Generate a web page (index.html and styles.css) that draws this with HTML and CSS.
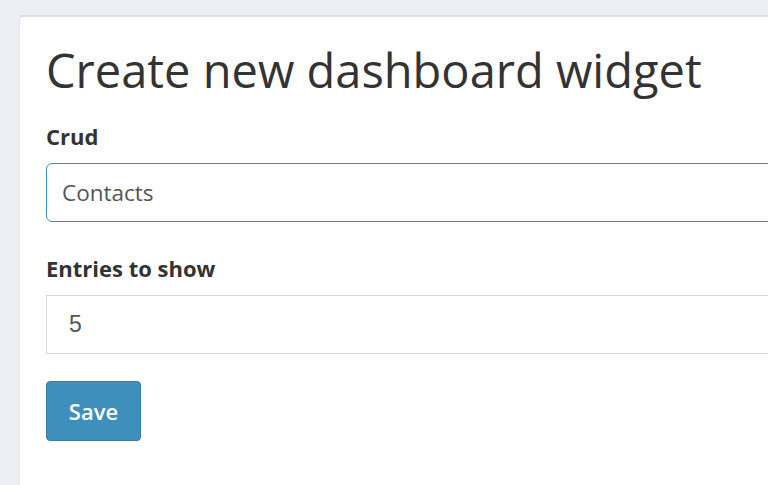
FILE: index.html
```html
<!DOCTYPE html>
<html lang="en">
<head>
    <meta charset="UTF-8">
    <meta name="viewport" content="width=device-width, initial-scale=1.0">
    <title>Create new dashboard widget</title>
    <link rel="stylesheet" href="styles.css">
</head>
<body>
    <div class="box">
        <h1>Create new dashboard widget</h1>

        <form class="widget-form">
            <div class="form-group">
                <label for="crud">Crud</label>
                <input type="text" id="crud" class="form-control is-focused" value="Contacts">
            </div>

            <div class="form-group">
                <label for="entries">Entries to show</label>
                <input type="text" id="entries" class="form-control number" value="5">
            </div>

            <div class="actions">
                <button type="submit" class="btn-primary">Save</button>
            </div>
        </form>
    </div>
</body>
</html>
```

FILE: styles.css
```css
:root {
    --bg: #ecf0f5;
    --primary: #3c8dbc;
    --primary-dark: #367fa9;
    --text: #333333;
    --input-text: #555555;
    --input-border: #d2d6de;
}

* {
    box-sizing: border-box;
    margin: 0;
    padding: 0;
}

body {
    background-color: var(--bg);
    color: var(--text);
    font-family: 'Open Sans', Lato, sans-serif;
    overflow: hidden;
    padding: 15px 0 0 19px;
}

.box {
    background: white;
    width: 800px;
    min-height: 520px;
    border: 1px solid #e4e6e9;
    border-top: 2px solid #dcdfe3;
    border-radius: 4px;
    padding: 25px 26px;
}

h1 {
    font-size: 47px;
    font-weight: 400;
    line-height: 56px;
    margin-bottom: 23px;
}

.widget-form {
    display: flex;
    flex-direction: column;
    gap: 31px;
}

.form-group {
    display: flex;
    flex-direction: column;
    gap: 12px;
}

.form-group + .actions {
    margin-top: -4px;
}

label {
    font-size: 22px;
    font-weight: 700;
    line-height: 30px;
}

.form-control {
    height: 59px;
    width: 100%;
    border: 1px solid var(--input-border);
    padding: 0 15px;
    font-family: inherit;
    font-size: 22.5px;
    color: var(--input-text);
    outline: none;
}

.form-control.is-focused {
    border-color: var(--primary);
    border-radius: 6px;
}

.form-control.number {
    padding-left: 22px;
    font-family: 'Liberation Sans', Arial, sans-serif;
    font-size: 23px;
}

.actions {
    display: flex;
}

.btn-primary {
    width: 95px;
    height: 60px;
    background-color: #3f8fbd;
    border: 1px solid var(--primary-dark);
    border-radius: 4px;
    color: white;
    font-family: inherit;
    font-size: 22px;
    font-weight: 600;
    cursor: pointer;
}
```
